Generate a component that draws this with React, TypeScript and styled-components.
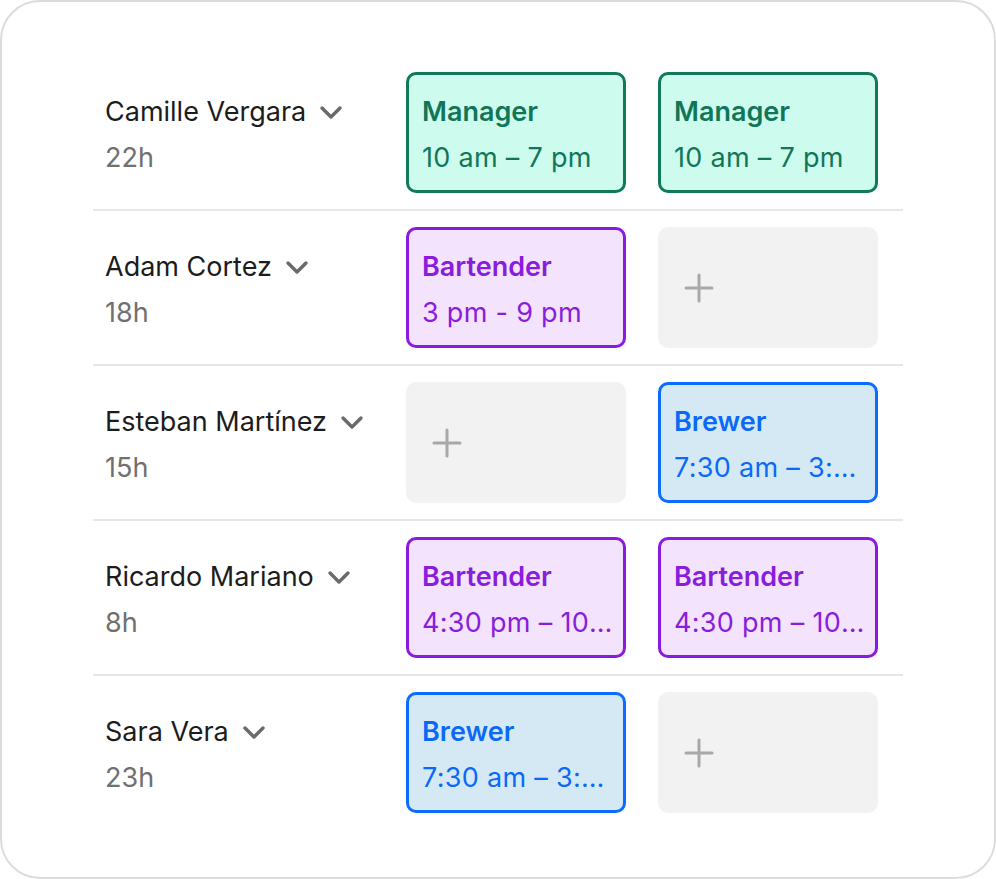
import styled, { createGlobalStyle } from 'styled-components';

const GlobalStyle = createGlobalStyle`
  html, body {
    margin: 0;
    padding: 0;
    background: #fff;
  }
  body {
    font-family: Inter, "Noto Sans", "Liberation Sans", sans-serif;
  }
`

const Frame = styled.div`
  width: 996px;
  height: 879px;
  box-sizing: border-box;
  border: 2px solid #dcdcdc;
  border-radius: 40px;
  background: #fff;
  padding: 54px 0 0 91px;
`

const Rows = styled.div`
  width: 810px;
  display: flex;
  flex-direction: column;
`

const Row = styled.div`
  display: grid;
  grid-template-columns: 1fr 220px 220px;
  column-gap: 32px;
  padding: 16px 25px 16px 12px;
  border-bottom: 2px solid #e6e6e6;
  &:last-child {
    border-bottom: none;
  }
`

const Person = styled.div`
  display: flex;
  flex-direction: column;
  justify-content: center;
  gap: 12px;
  padding-top: 4px;
`

const NameLine = styled.div`
  display: flex;
  align-items: center;
  gap: 13px;
  font-size: 27px;
  line-height: 34px;
  color: #1c1c1c;
`

const Hours = styled.div`
  font-size: 27px;
  line-height: 34px;
  color: #707070;
`

type Role = 'manager' | 'bartender' | 'brewer';

const palette: Record<Role, { border: string; bg: string; text: string }> = {
  manager: { border: '#12785a', bg: '#cdfcee', text: '#117657' },
  bartender: { border: '#8a1bde', bg: '#f3e3fc', text: '#891ddb' },
  brewer: { border: '#0b6cfd', bg: '#d5e9f5', text: '#0b69f7' },
};

const Shift = styled.div<{ $role: Role }>`
  height: 121px;
  box-sizing: border-box;
  border: 3px solid ${p => palette[p.$role].border};
  background: ${p => palette[p.$role].bg};
  color: ${p => palette[p.$role].text};
  border-radius: 10px;
  padding: 4px 5px 0 13px;
  display: flex;
  flex-direction: column;
  justify-content: center;
  gap: 12px;
  min-width: 0;
`

const ShiftTitle = styled.div`
  font-size: 27px;
  line-height: 34px;
  font-weight: 600;
`

const ShiftTime = styled.div`
  font-size: 27px;
  line-height: 34px;
  letter-spacing: 0.3px;
  white-space: nowrap;
  overflow: hidden;
  text-overflow: ellipsis;
`

const Empty = styled.div`
  height: 121px;
  box-sizing: border-box;
  background: #f2f2f2;
  border-radius: 10px;
  display: flex;
  align-items: center;
  padding-left: 25px;
`

const Chevron = () => (
  <svg width="24" height="16" viewBox="0 0 24 16">
    <path d="M3 4 L12 13 L21 4" fill="none" stroke="#6a6a6a" strokeWidth="3.4" strokeLinecap="round" strokeLinejoin="round" />
  </svg>
)

const Plus = () => (
  <svg width="32" height="32" viewBox="0 0 32 32">
    <path d="M16 3 V29 M3 16 H29" stroke="#a8a8a8" strokeWidth="3" strokeLinecap="round" />
  </svg>
)

type Cell = { role: Role; title: string; time: string } | null;

const people: { name: string; hours: string; cells: Cell[] }[] = [
  {
    name: 'Camille Vergara', hours: '22h', cells: [
      { role: 'manager', title: 'Manager', time: '10 am – 7 pm' },
      { role: 'manager', title: 'Manager', time: '10 am – 7 pm' },
    ]
  },
  {
    name: 'Adam Cortez', hours: '18h', cells: [
      { role: 'bartender', title: 'Bartender', time: '3 pm - 9 pm' },
      null,
    ]
  },
  {
    name: 'Esteban Martínez', hours: '15h', cells: [
      null,
      { role: 'brewer', title: 'Brewer', time: '7:30 am – 3:30 pm' },
    ]
  },
  {
    name: 'Ricardo Mariano', hours: '8h', cells: [
      { role: 'bartender', title: 'Bartender', time: '4:30 pm – 10:30 pm' },
      { role: 'bartender', title: 'Bartender', time: '4:30 pm – 10:30 pm' },
    ]
  },
  {
    name: 'Sara Vera', hours: '23h', cells: [
      { role: 'brewer', title: 'Brewer', time: '7:30 am – 3:30 pm' },
      null,
    ]
  },
];

export default function App() {
  return (
    <>
      <GlobalStyle />
      <Frame>
        <Rows>
          {people.map((person, i) => (
            <Row key={i}>
              <Person>
                <NameLine>
                  {person.name}
                  <Chevron />
                </NameLine>
                <Hours>{person.hours}</Hours>
              </Person>
              {person.cells.map((cell, j) =>
                cell ? (
                  <Shift key={j} $role={cell.role}>
                    <ShiftTitle>{cell.title}</ShiftTitle>
                    <ShiftTime>{cell.time}</ShiftTime>
                  </Shift>
                ) : (
                  <Empty key={j}><Plus /></Empty>
                )
              )}
            </Row>
          ))}
        </Rows>
      </Frame>
    </>
  )
}
